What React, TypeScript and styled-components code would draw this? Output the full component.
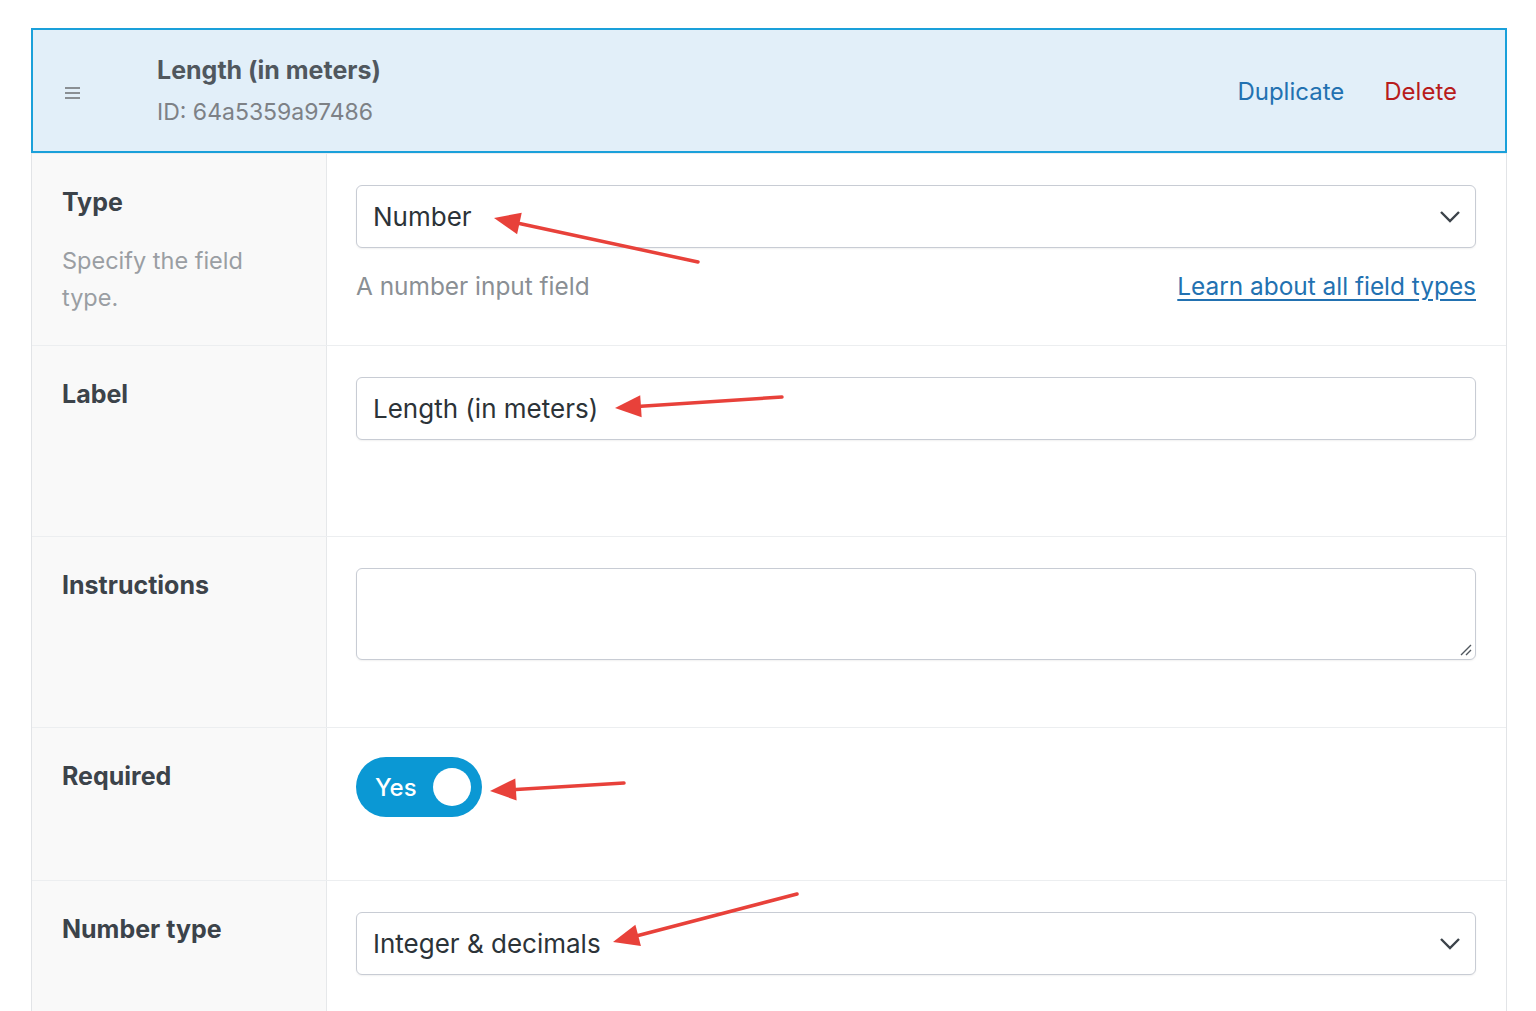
import React from 'react';
import styled, {createGlobalStyle} from 'styled-components';

const GlobalStyle = createGlobalStyle`
    html, body {
        margin: 0;
        padding: 0;
        background: #ffffff;
        font-family: Inter, "Noto Sans", "Liberation Sans", sans-serif;
    }
`;

const Page = styled.div`
    position: relative;
    width: 1536px;
    height: 1011px;
    overflow: hidden;
    padding: 28px 0 0 31px;
    box-sizing: border-box;
`;

const Card = styled.div`
    width: 1476px;
    border-left: 1px solid #e2e4e7;
    border-right: 1px solid #e2e4e7;
    box-sizing: border-box;
`;

const Header = styled.div`
    display: flex;
    align-items: center;
    height: 125px;
    margin: 0 -1px;
    background: #e2eff9;
    border: 2px solid #1aa0da;
    box-sizing: border-box;
    padding: 0 48px 0 32px;
`;

const Handle = styled.div`
    width: 15px;
    display: flex;
    flex-direction: column;
    gap: 3px;
    margin: 4px 77px 0 0;
    span {
        display: block;
        height: 2px;
        background: #8a8f94;
    }
`;

const TitleBlock = styled.div`
    flex: 1;
    display: flex;
    flex-direction: column;
    gap: 12px;
    margin-top: 1px;
`;

const Title = styled.div`
    font-size: 25px;
    line-height: 30px;
    font-weight: 700;
    color: #50575e;
`;

const FieldId = styled.div`
    font-size: 23px;
    line-height: 30px;
    color: #7d8186;
`;

const Actions = styled.div`
    display: flex;
    gap: 40px;
    font-size: 24px;
    margin-top: 2px;
`;

const ActionLink = styled.span<{danger?: boolean}>`
    color: ${p => (p.danger ? '#b81c1c' : '#2271b1')};
`;

const Row = styled.div<{height: number}>`
    display: flex;
    height: ${p => p.height}px;
    box-sizing: border-box;
    border-top: 1px solid #eceef0;
    &:first-of-type {
        border-top: none;
    }
`;

const LabelCell = styled.div`
    width: 295px;
    flex-shrink: 0;
    background: #f9f9f9;
    border-right: 1px solid #e6e8ea;
    box-sizing: border-box;
    padding: 33px 20px 0 30px;
`;

const LabelText = styled.div`
    font-size: 25px;
    line-height: 30px;
    font-weight: 700;
    color: #3c434a;
`;

const LabelHint = styled.div`
    margin-top: 25px;
    width: 205px;
    font-size: 23.5px;
    line-height: 37px;
    color: #9a9ea3;
`;

const InputCell = styled.div`
    flex: 1;
    padding: 31px 30px 0 29px;
`;

const Box = styled.div<{tall?: boolean}>`
    position: relative;
    display: flex;
    align-items: center;
    height: ${p => (p.tall ? '92px' : '63px')};
    background: #fff;
    border: 1px solid #c8ccd4;
    border-radius: 6px;
    box-shadow: 0 1px 2px rgba(0, 0, 0, 0.06);
    box-sizing: border-box;
    padding: 0 14px 0 16px;
    font-size: 26px;
    color: #2c3338;
`;

const BoxText = styled.span`
    flex: 1;
`;

const Resize = styled.svg`
    position: absolute;
    right: 2px;
    bottom: 2px;
`;

const HelpRow = styled.div`
    display: flex;
    justify-content: space-between;
    margin-top: 23px;
    font-size: 24.4px;
    line-height: 30px;
`;

const HelpText = styled.span`
    color: #8a8f94;
`;

const HelpLink = styled.a`
    color: #2271b1;
    text-decoration: underline;
    text-underline-offset: 4px;
`;

const Toggle = styled.div`
    display: flex;
    align-items: center;
    justify-content: space-between;
    width: 126px;
    height: 60px;
    margin-top: -2px;
    border-radius: 30px;
    background: #0b98d4;
    padding: 0 11px 0 19px;
    box-sizing: border-box;
    color: #fff;
    font-size: 24px;
    font-weight: 500;
`;

const Knob = styled.div`
    width: 38px;
    height: 38px;
    border-radius: 50%;
    background: #fff;
`;

const Annotations = styled.svg`
    position: absolute;
    left: 0;
    top: 0;
    pointer-events: none;
`;

function Chevron() {
    return (
        <svg width="22" height="14" viewBox="0 0 22 14">
            <path d="M2 2 L11 11 L20 2" fill="none" stroke="#3c434a" strokeWidth="2.4" />
        </svg>
    );
}

type ArrowProps = {x1: number; y1: number; x2: number; y2: number};

function Arrow({x1, y1, x2, y2}: ArrowProps) {
    const a = Math.atan2(y2 - y1, x2 - x1);
    const len = 26;
    const w = 11;
    const bx = x2 - Math.cos(a) * len;
    const by = y2 - Math.sin(a) * len;
    const px = -Math.sin(a) * w;
    const py = Math.cos(a) * w;
    return (
        <g>
            <line x1={x1} y1={y1} x2={bx} y2={by} stroke="#e8413a" strokeWidth="3.5" strokeLinecap="round" />
            <polygon points={`${x2},${y2} ${bx + px},${by + py} ${bx - px},${by - py}`} fill="#e8413a" />
        </g>
    );
}

export default function App() {
    return (
        <>
            <GlobalStyle />
            <Page>
                <Card>
                    <Header>
                        <Handle>
                            <span />
                            <span />
                            <span />
                        </Handle>
                        <TitleBlock>
                            <Title>Length (in meters)</Title>
                            <FieldId>ID: 64a5359a97486</FieldId>
                        </TitleBlock>
                        <Actions>
                            <ActionLink>Duplicate</ActionLink>
                            <ActionLink danger>Delete</ActionLink>
                        </Actions>
                    </Header>

                    <Row height={192}>
                        <LabelCell>
                            <LabelText>Type</LabelText>
                            <LabelHint>Specify the field type.</LabelHint>
                        </LabelCell>
                        <InputCell>
                            <Box>
                                <BoxText>Number</BoxText>
                                <Chevron />
                            </Box>
                            <HelpRow>
                                <HelpText>A number input field</HelpText>
                                <HelpLink>Learn about all field types</HelpLink>
                            </HelpRow>
                        </InputCell>
                    </Row>

                    <Row height={191}>
                        <LabelCell>
                            <LabelText>Label</LabelText>
                        </LabelCell>
                        <InputCell>
                            <Box>
                                <BoxText>Length (in meters)</BoxText>
                            </Box>
                        </InputCell>
                    </Row>

                    <Row height={191}>
                        <LabelCell>
                            <LabelText>Instructions</LabelText>
                        </LabelCell>
                        <InputCell>
                            <Box tall>
                                <Resize width="16" height="16" viewBox="0 0 16 16">
                                    <path d="M14 4 L4 14 M14 9 L9 14" stroke="#50575e" strokeWidth="1.4" />
                                </Resize>
                            </Box>
                        </InputCell>
                    </Row>

                    <Row height={153}>
                        <LabelCell>
                            <LabelText>Required</LabelText>
                        </LabelCell>
                        <InputCell>
                            <Toggle>
                                Yes
                                <Knob />
                            </Toggle>
                        </InputCell>
                    </Row>

                    <Row height={140}>
                        <LabelCell>
                            <LabelText>Number type</LabelText>
                        </LabelCell>
                        <InputCell>
                            <Box>
                                <BoxText>Integer &amp; decimals</BoxText>
                                <Chevron />
                            </Box>
                        </InputCell>
                    </Row>
                </Card>

                <Annotations width="1536" height="1011">
                    <Arrow x1={698} y1={262} x2={494} y2={218} />
                    <Arrow x1={782} y1={397} x2={615} y2={408} />
                    <Arrow x1={624} y1={783} x2={490} y2={791} />
                    <Arrow x1={797} y1={894} x2={613} y2={942} />
                </Annotations>
            </Page>
        </>
    );
}
